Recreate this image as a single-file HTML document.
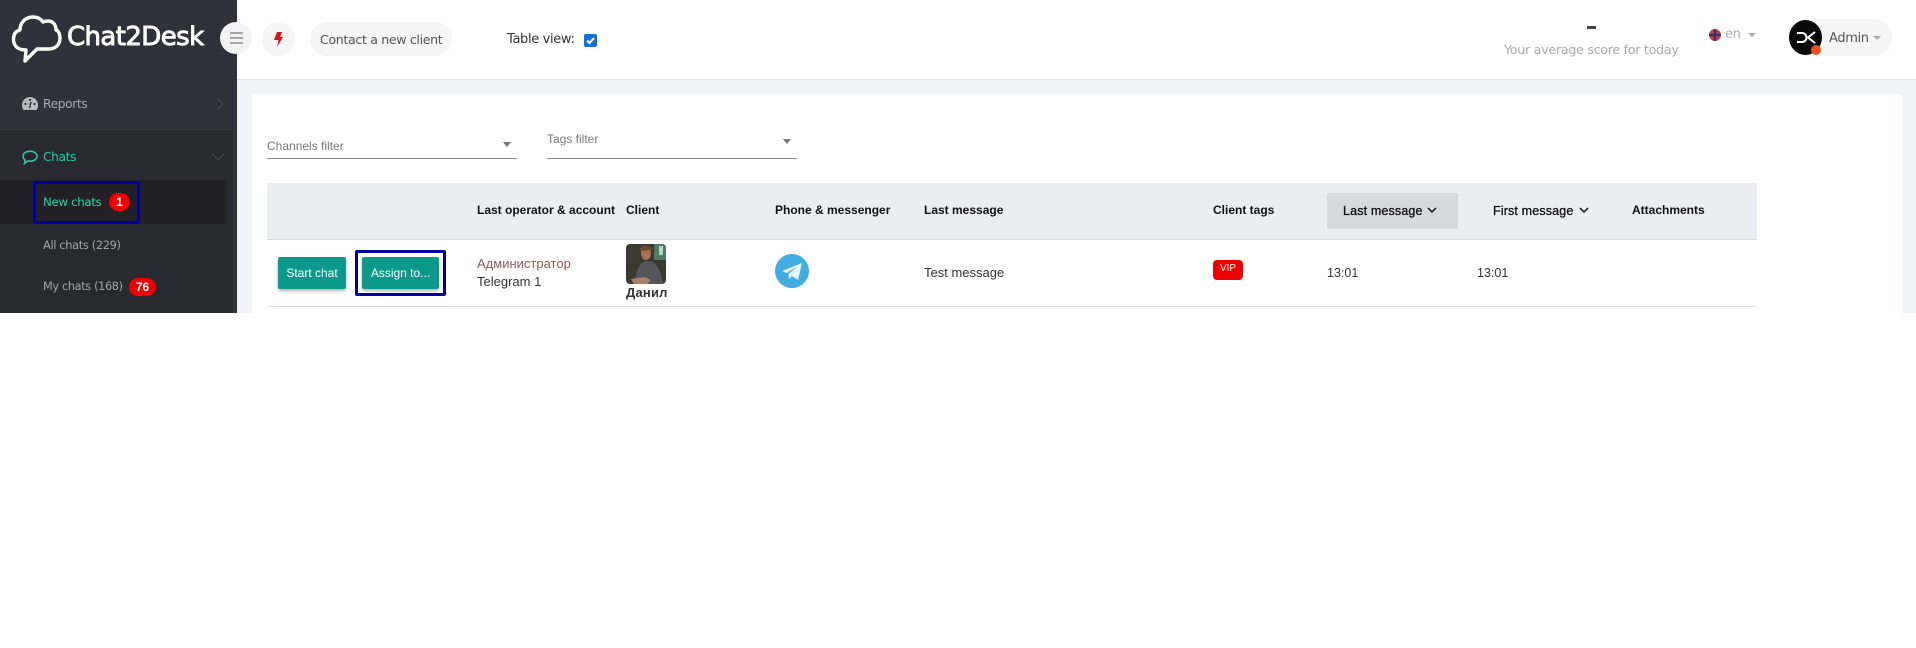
<!DOCTYPE html>
<html><head><meta charset="utf-8"><title>Chat2Desk</title>
<style>
html,body{margin:0;padding:0;background:#fff}
#p{position:relative;width:1916px;height:648px;overflow:hidden;background:#fff;font-family:"Liberation Sans",sans-serif}
#p div,#p svg{position:absolute}
.t{white-space:nowrap;line-height:16px}
.o{font-family:"DejaVu Sans",sans-serif;letter-spacing:-.35px}
.h{font-weight:bold;font-size:12px;color:#111;top:202px}
.c{font-size:13.5px;color:#333;}
.btn{background:#0b9a8a;border-radius:2px;box-shadow:0 2px 3px rgba(0,0,0,.3);color:#fff;font-size:12px;line-height:32px;text-align:center;top:257px;height:32px}
.tri{width:0;height:0;border-left:5px solid transparent;border-right:5px solid transparent;border-top:5px solid #777}
</style></head><body><div id="p">
<div style="left:0;top:0;width:1916px;height:313px;background:#f1f2f8"></div>
<div style="left:237px;top:0;width:1679px;height:79px;background:#fff;border-bottom:1px solid #e2e3e8"></div>
<div style="left:252px;top:94px;width:1650px;height:219px;background:#fff;border-radius:3px 3px 0 0"></div>

<!-- sidebar -->
<div style="left:0;top:0;width:237px;height:313px;background:#30313a"></div>
<div style="left:0;top:129px;width:232px;height:184px;background:#292a31;border-top:1px solid #3a3b43;box-sizing:border-box"></div>
<div style="left:0;top:180px;width:227px;height:44px;background:#212126"></div>
<svg style="left:0;top:0" width="70" height="70" viewBox="0 0 70 70" fill="none"><path d="M26 50C17 50 13.500 45 13.500 39 13.500 34 16 31 20 30 20 22 26 17 33 17 38 17 41 19 43 22 45 21 46 21 48 21 53 21 56 25 56 30 59 31 60 35 60 38 60 45 55 49 49 49H37L25 61Z" stroke="#fff" stroke-width="3.400" stroke-linejoin="round"/></svg>
<div class="t" style="left:67px;top:21px;font:normal 26px/32px 'DejaVu Sans',sans-serif;color:#fff;letter-spacing:-.6px;-webkit-text-stroke:.9px #fff">Chat2Desk</div>
<svg style="left:22px;top:97px" width="16" height="13" viewBox="0 0 16 13"><path d="M8 0a8 8 0 0 0-8 8c0 2 .5 3.500 1.500 5h13c1-1.500 1.500-3 1.500-5a8 8 0 0 0-8-8z" fill="#b8b9be"/><circle cx="8" cy="3" r="1.100" fill="#30313a"/><circle cx="3.500" cy="7" r="1.100" fill="#30313a"/><circle cx="12.500" cy="7" r="1.100" fill="#30313a"/><path d="M9 5 7.500 11" stroke="#30313a" stroke-width="1.500"/></svg>
<div class="t o" style="left:43px;top:96px;font-size:12.200px;color:#a9aab0">Reports</div>
<svg style="left:216px;top:97px" width="8" height="14" viewBox="0 0 8 14" fill="none"><path d="M1 1l6 6-6 6" stroke="#4c4d56"/></svg>
<svg style="left:22px;top:150px" width="16" height="15" viewBox="0 0 16 15" fill="none"><path d="M8 1.200c4 0 7 2.200 7 5s-3 5-7 5c-.800 0-1.500-.1-2.200-.3L2.500 13.500l.6-3.500C1.800 9.100 1 7.700 1 6.200c0-2.800 3-5 7-5z" stroke="#26d0a8" stroke-width="1.500"/></svg>
<div class="t o" style="left:43px;top:149px;font-size:12.200px;color:#26c7a2">Chats</div>
<svg style="left:211px;top:153px" width="14" height="8" viewBox="0 0 14 8" fill="none"><path d="M1 1l6 6 6-6" stroke="#44454e"/></svg>
<div style="left:33px;top:181px;width:107px;height:43px;box-sizing:border-box;border:3px solid #0000a0;border-radius:2px"></div>
<div class="t o" style="left:43px;top:194px;font-size:11.800px;color:#26d5ab">New chats</div>
<div style="left:109px;top:193px;width:21px;height:18px;background:#ee0000;border-radius:9px;color:#fff;font-size:12px;font-weight:bold;line-height:18px;text-align:center">1</div>
<div class="t o" style="left:43px;top:237px;font-size:11.400px;color:#a3a4aa">All chats (229)</div>
<div class="t o" style="left:43px;top:279px;font-size:11.300px;color:#a3a4aa">My chats (168)</div>
<div style="left:129px;top:278px;width:27px;height:18px;background:#ee0000;border-radius:9px;color:#fff;font-size:12px;font-weight:bold;line-height:18px;text-align:center">76</div>

<!-- header -->
<div style="left:220px;top:22px;width:32px;height:32px;background:#f3f3f3;border-radius:50%"></div>
<div style="left:230px;top:32px;width:13px;height:2px;background:#a5a5a5;box-shadow:0 5px 0 #a5a5a5,0 10px 0 #a5a5a5"></div>
<div style="left:262px;top:22px;width:33px;height:34px;background:#f5f5f5;border-radius:50%"></div>
<svg style="left:274px;top:32px" width="9" height="15" viewBox="0 0 9 15"><path d="M3 0h5L6 5h3L3 15l1.500-7H0z" fill="#e01010"/></svg>
<div style="left:310px;top:22px;width:142px;height:34px;background:#f5f5f5;border-radius:17px"></div>
<div class="t o" style="left:320px;top:32px;font-size:12.600px;color:#555">Contact a new client</div>
<div class="t o" style="left:507px;top:32px;font-size:13px;color:#333">Table view:</div>
<div style="left:584px;top:34px;width:13px;height:13px;background:#1272d8;border-radius:2px"></div>
<svg style="left:584px;top:34px" width="13" height="13" viewBox="0 0 13 13" fill="none"><path d="M3 6.500l2.500 2.500L10 4" stroke="#fff" stroke-width="2"/></svg>
<div style="left:1587px;top:26px;width:9px;height:2.500px;background:#444"></div>
<div class="t o" style="left:1504px;top:43px;font-size:12.800px;color:#aaa">Your average score for today</div>
<svg style="left:1709px;top:29px" width="12" height="12" viewBox="0 0 12 12"><circle cx="6" cy="6" r="6" fill="#d8374a"/><path d="M0 6h12M6 0v12" stroke="#33356e" stroke-width="2.500"/></svg>
<div class="t o" style="left:1725px;top:27px;font-size:13px;color:#aaa">en</div>
<div class="tri" style="left:1748px;top:33px;border-left-width:4px;border-right-width:4px;border-top-width:4px;border-top-color:#aaa"></div>
<div style="left:1800px;top:19px;width:92px;height:37px;background:#f5f5f6;border-radius:0 18px 18px 0"></div>
<div style="left:1789px;top:20px;width:33px;height:35px;background:#0a0a0a;border-radius:50%"></div>
<svg style="left:1796px;top:31px" width="20" height="13" viewBox="0 0 20 13" fill="none"><path d="M1 2h5a4.500 4.500 0 0 1 0 9H1M19 1l-7 5.500 7 5.500" stroke="#fff" stroke-width="2"/></svg>
<div style="left:1811px;top:45px;width:10px;height:10px;background:#ee4f20;border-radius:50%"></div>
<div class="t o" style="left:1829px;top:31px;font-size:13px;color:#555">Admin</div>
<div class="tri" style="left:1873px;top:36px;border-left-width:4px;border-right-width:4px;border-top-width:4px;border-top-color:#aaa"></div>

<!-- filters -->
<div class="t" style="left:267px;top:138px;font-size:12px;color:#777">Channels filter</div>
<div class="tri" style="left:503px;top:142px;border-left-width:4px;border-right-width:4px"></div>
<div style="left:267px;top:158px;width:250px;height:1px;background:#8a8a8a"></div>
<div class="t" style="left:547px;top:131px;font-size:12px;color:#777">Tags filter</div>
<div class="tri" style="left:783px;top:139px;border-left-width:4px;border-right-width:4px"></div>
<div style="left:547px;top:158px;width:250px;height:1px;background:#8a8a8a"></div>

<!-- table -->
<div style="left:267px;top:183px;width:1490px;height:56px;background:#ecedf1;border-bottom:1px solid #dcdcdf"></div>
<div style="left:267px;top:306px;width:1490px;height:1px;background:#e0e0e2"></div>
<div class="t h" style="left:477px">Last operator &amp; account</div>
<div class="t h" style="left:626px">Client</div>
<div class="t h" style="left:775px">Phone &amp; messenger</div>
<div class="t h" style="left:924px">Last message</div>
<div class="t h" style="left:1213px">Client tags</div>
<div style="left:1327px;top:193px;width:131px;height:36px;background:#d8d9de;border-radius:2px"></div>
<div class="t" style="left:1343px;top:203px;font-size:12.500px;letter-spacing:.15px;color:#111;-webkit-text-stroke:.3px #111">Last message</div>
<svg style="left:1426px;top:206px" width="12" height="9" viewBox="0 0 12 9" fill="none"><path d="M2 2l4 4 4-4" stroke="#111" stroke-width="1.500"/></svg>
<div class="t" style="left:1493px;top:203px;font-size:12.500px;letter-spacing:.15px;color:#111;-webkit-text-stroke:.3px #111">First message</div>
<svg style="left:1578px;top:206px" width="12" height="9" viewBox="0 0 12 9" fill="none"><path d="M2 2l4 4 4-4" stroke="#111" stroke-width="1.500"/></svg>
<div class="t h" style="left:1632px">Attachments</div>

<div class="btn" style="left:278px;width:68px">Start chat</div>
<div style="left:355px;top:250px;width:91px;height:46px;box-sizing:border-box;border:3px solid #0000a0;border-radius:2px"></div>
<div class="btn" style="left:362px;width:77px">Assign to...</div>
<div class="t c" style="left:477px;top:256px;color:#8d5a5a;font-size:13px">Администратор</div>
<div class="t c" style="left:477px;top:274px;font-size:13px;color:#333">Telegram 1</div>
<svg style="left:626px;top:244px" width="40" height="40" viewBox="0 0 40 40">
<defs><clipPath id="r"><rect width="40" height="40" rx="4"/></clipPath></defs>
<g clip-path="url(#r)"><rect width="40" height="40" fill="#3a3a32"/><rect x="28" width="12" height="16" fill="#4f7a64"/><rect x="33" y="2" width="4" height="9" fill="#b8d4c6"/><ellipse cx="20" cy="9" rx="5" ry="7" fill="#a9714f"/><path d="M14 6c1-6 11-6 13 0l-3 0-7 1z" fill="#6e4a2a"/><path d="M9 40c1-16 6-23 13-23s12 6 15 23z" fill="#55565a"/><path d="M5 35l14-2 6 3-4 4H8z" fill="#a98068"/></g></svg>
<div class="t" style="left:626px;top:285px;font-size:13px;font-weight:bold;color:#333;letter-spacing:.2px">Данил</div>
<div style="left:775px;top:254px;width:34px;height:34px;background:#40aee0;border-radius:50%"></div>
<svg style="left:781px;top:262px" width="22" height="19" viewBox="0 0 22 19"><path d="M1 9 21 1 17 18 11 14 8 17 7.500 12 17 4 5.500 11z" fill="#eaf6fb"/></svg>
<div class="t c" style="left:924px;top:265px;font-size:13px;color:#333">Test message</div>
<div style="left:1213px;top:260px;width:30px;height:20px;background:#ee0000;border-radius:4px;color:#fff;font-size:10px;line-height:18px;text-align:center">VIP</div>
<div class="t c" style="left:1327px;top:265px;font-size:12.500px;color:#333">13:01</div>
<div class="t c" style="left:1477px;top:265px;font-size:12.500px;color:#333">13:01</div>
</div></body></html>
